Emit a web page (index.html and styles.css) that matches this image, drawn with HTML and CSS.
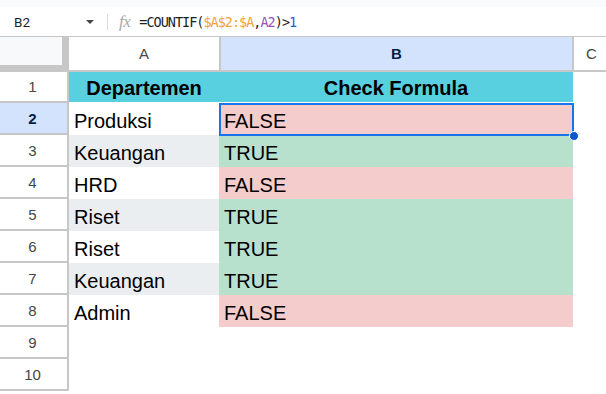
FILE: index.html
```html
<!DOCTYPE html>
<html>
<head>
<meta charset="utf-8">
<link rel="stylesheet" href="styles.css">
</head>
<body>
<div class="top-strip"></div>
<div class="formula-bar">
  <div class="namebox">
    <span class="cellref">B2</span>
    <svg class="caret" width="10" height="6" viewBox="0 0 10 6"><path d="M1 1 L9 1 L5 5 Z" fill="#444"/></svg>
  </div>
  <div class="sep"></div>
  <span class="fx">fx</span>
  <div class="formula">=COUNTIF(<span class="r1">$A$2:$A</span>,<span class="r2">A2</span>)&gt;<span class="num">1</span></div>
</div>
<div class="sheet">
  <div class="col-head">
    <div class="corner"><div class="corner-in"></div></div>
    <div class="ch ch-a">A</div>
    <div class="ch ch-b">B</div>
    <div class="ch ch-c">C</div>
  </div>
  <div class="row r-first">
    <div class="rh">1</div>
    <div class="c head">Departemen</div>
    <div class="c head">Check Formula</div>
    <div class="c"></div>
  </div>
  <div class="row">
    <div class="rh rh-sel">2</div>
    <div class="c">Produksi</div>
    <div class="c f sel">FALSE<div class="sel-box"></div><div class="handle"></div></div>
    <div class="c"></div>
  </div>
  <div class="row">
    <div class="rh">3</div>
    <div class="c g">Keuangan</div>
    <div class="c t">TRUE</div>
    <div class="c"></div>
  </div>
  <div class="row">
    <div class="rh">4</div>
    <div class="c">HRD</div>
    <div class="c f">FALSE</div>
    <div class="c"></div>
  </div>
  <div class="row">
    <div class="rh">5</div>
    <div class="c g">Riset</div>
    <div class="c t">TRUE</div>
    <div class="c"></div>
  </div>
  <div class="row">
    <div class="rh">6</div>
    <div class="c">Riset</div>
    <div class="c t">TRUE</div>
    <div class="c"></div>
  </div>
  <div class="row">
    <div class="rh">7</div>
    <div class="c g">Keuangan</div>
    <div class="c t">TRUE</div>
    <div class="c"></div>
  </div>
  <div class="row">
    <div class="rh">8</div>
    <div class="c">Admin</div>
    <div class="c f">FALSE</div>
    <div class="c"></div>
  </div>
  <div class="row">
    <div class="rh">9</div>
    <div class="c"></div>
    <div class="c"></div>
    <div class="c"></div>
  </div>
  <div class="row">
    <div class="rh">10</div>
    <div class="c"></div>
    <div class="c"></div>
    <div class="c"></div>
  </div>
</div>
</body>
</html>
```
FILE: styles.css
```css
* { box-sizing: border-box; }
html, body {
  margin: 0;
  padding: 0;
  background: #ffffff;
  width: 606px;
  height: 394px;
  overflow: hidden;
  font-family: "Liberation Sans", Arial, sans-serif;
}
.top-strip {
  height: 7px;
  background: #f9fbfd;
}
.formula-bar {
  height: 29px;
  display: flex;
  align-items: center;
  background: #ffffff;
}
.namebox {
  width: 107px;
  display: flex;
  align-items: center;
  padding-left: 14px;
}
.cellref {
  font-family: Roboto, "Liberation Sans", sans-serif;
  font-size: 13.5px;
  color: #1f1f1f;
  flex: 1;
}
.caret {
  margin-right: 12px;
}
.sep {
  width: 1px;
  height: 16px;
  background: #dadce0;
}
.fx {
  font-family: "Liberation Serif", serif;
  font-style: italic;
  font-size: 17px;
  color: #a8a8a8;
  margin-left: 11px;
  margin-right: 9px;
  letter-spacing: -0.5px;
}
.formula {
  font-family: "DejaVu Sans Mono", monospace;
  font-size: 13.5px;
  letter-spacing: -1px;
  color: #1f1f1f;
  white-space: nowrap;
}
.r1 { color: #f2a23a; }
.r2 { color: #9b4fc0; }
.num { color: #1a5fd6; }

.sheet {
  border-top: 1px solid #c7c7c7;
}
.col-head {
  display: grid;
  grid-template-columns: 69px 152px 353px 1fr;
  height: 35px;
}
.corner {
  background: #c7c7c7;
  padding-right: 7px;
  padding-bottom: 7px;
}
.corner-in {
  background: #f8f9fa;
  height: 100%;
}
.ch {
  border-bottom: 2px solid #c7c7c7;
  border-right: 2px solid #c7c7c7;
  font-size: 15px;
  color: #444746;
  display: flex;
  align-items: center;
  justify-content: center;
  background: #ffffff;
}
.ch-b {
  background: #d3e3fd;
  color: #041e49;
  font-weight: bold;
}
.ch-c {
  border-right: none;
  justify-content: flex-start;
  padding-left: 12px;
}
.row {
  display: grid;
  grid-template-columns: 69px 150px 354px 1fr;
  height: 32px;
}
.r-first {
  height: 31px;
}
.rh {
  border-right: 2px solid #c7c7c7;
  border-bottom: 2px solid #c7c7c7;
  font-size: 15px;
  color: #444746;
  display: flex;
  align-items: center;
  justify-content: center;
  background: #ffffff;
  padding-right: 2px;
}
.rh-sel {
  background: #d3e3fd;
  color: #041e49;
  font-weight: bold;
}
.c {
  font-size: 20px;
  color: #000000;
  display: flex;
  align-items: center;
  padding-top: 4px;
  padding-left: 5px;
  white-space: nowrap;
  position: relative;
}
.r-first .c {
  padding-top: 2px;
  border-bottom: 1px solid #ffffff;
}
.head {
  background: #58d0e0;
  font-weight: bold;
  justify-content: center;
  padding-left: 0;
}
.r-first .c:last-child {
  background: transparent;
}
.g { background: #ebeef1; }
.f { background: #f4cccc; }
.t { background: #b7e1cd; }
.sel {
  z-index: 2;
}
.sel-box {
  position: absolute;
  left: 0;
  top: 0;
  right: -1px;
  bottom: -1px;
  border: 2px solid #1a73e8;
}
.handle {
  position: absolute;
  width: 10px;
  height: 10px;
  right: -6px;
  bottom: -6px;
  border-radius: 50%;
  background: #0b57d0;
  border: 1px solid #ffffff;
}
```
